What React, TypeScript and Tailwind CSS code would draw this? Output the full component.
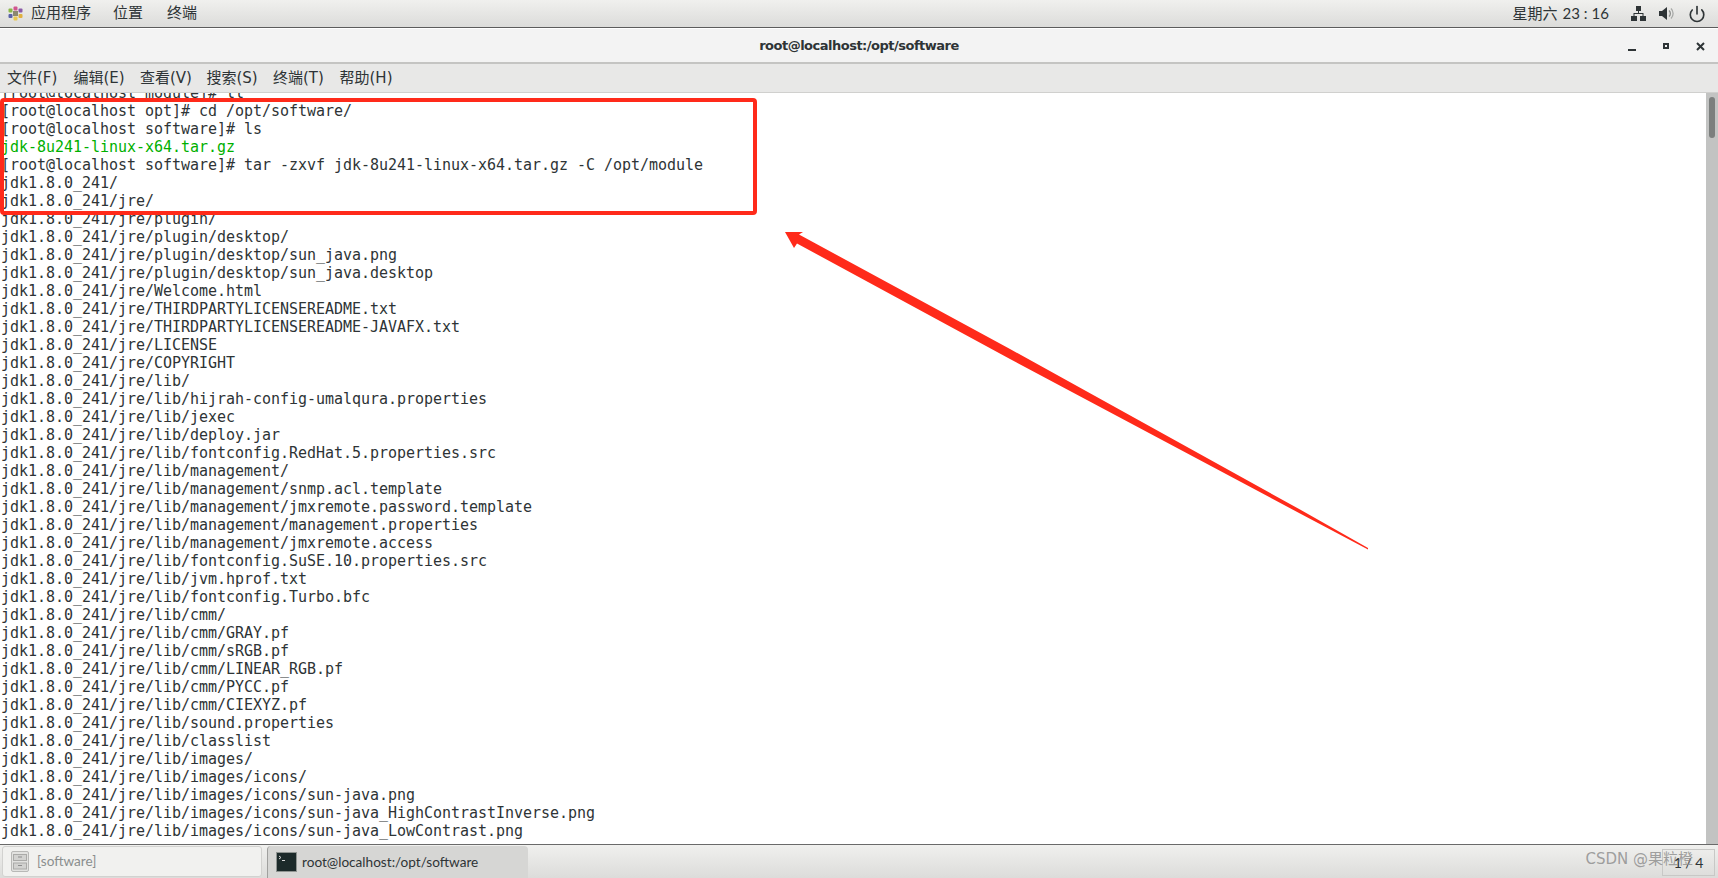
import { Power } from 'lucide-react'

const mono = "font-['DejaVu_Sans_Mono','Liberation_Mono',monospace]"
const cjk = "font-['DejaVu_Sans','Noto_Sans_CJK_SC',sans-serif]"
const narrow = "font-['Lato','Noto_Sans_CJK_SC',sans-serif]"

const files = [
  'plugin/', 'plugin/desktop/', 'plugin/desktop/sun_java.png', 'plugin/desktop/sun_java.desktop', 'Welcome.html',
  'THIRDPARTYLICENSEREADME.txt', 'THIRDPARTYLICENSEREADME-JAVAFX.txt', 'LICENSE', 'COPYRIGHT', 'lib/',
  'lib/hijrah-config-umalqura.properties', 'lib/jexec', 'lib/deploy.jar', 'lib/fontconfig.RedHat.5.properties.src',
  'lib/management/', 'lib/management/snmp.acl.template', 'lib/management/jmxremote.password.template',
  'lib/management/management.properties', 'lib/management/jmxremote.access', 'lib/fontconfig.SuSE.10.properties.src',
  'lib/jvm.hprof.txt', 'lib/fontconfig.Turbo.bfc', 'lib/cmm/', 'lib/cmm/GRAY.pf', 'lib/cmm/sRGB.pf',
  'lib/cmm/LINEAR_RGB.pf', 'lib/cmm/PYCC.pf', 'lib/cmm/CIEXYZ.pf', 'lib/sound.properties', 'lib/classlist',
  'lib/images/', 'lib/images/icons/', 'lib/images/icons/sun-java.png', 'lib/images/icons/sun-java_HighContrastInverse.png',
  'lib/images/icons/sun-java_LowContrast.png',
]

const menus = ['文件(F)', '编辑(E)', '查看(V)', '搜索(S)', '终端(T)', '帮助(H)']

function Line({ children, green }: { children: string; green?: boolean }) {
  return <div className={`h-[18px] leading-[18px] whitespace-pre ${green ? 'text-[#00b000]' : 'text-[#2e3436]'}`}>{children}</div>
}

function AppLogo() {
  return (
    <svg width="15" height="15" viewBox="0 0 15 15">
      <rect x="5.5" y="0.5" width="4" height="4" rx="1" fill="#d0568f" />
      <rect x="10.5" y="2.5" width="4" height="4" rx="1" fill="#8a5aa8" />
      <rect x="10.5" y="8" width="4" height="4" rx="1" fill="#e0b040" />
      <rect x="5.5" y="10.5" width="4" height="4" rx="1" fill="#e8c850" />
      <rect x="0.5" y="8" width="4" height="4" rx="1" fill="#5a62a8" />
      <rect x="0.5" y="2.5" width="4" height="4" rx="1" fill="#8cb848" />
      <rect x="5" y="5" width="5" height="5" fill="#8c8870" />
    </svg>
  )
}

function NetworkIcon() {
  return (
    <svg width="15" height="15" viewBox="0 0 15 15" fill="#2e3436">
      <rect x="5" y="0" width="5" height="5" />
      <rect x="0" y="10" width="6" height="5" />
      <rect x="9" y="10" width="6" height="5" />
      <path d="M7 5h1v2h4.5v3h-1V8h-8v2h-1V7H7z" />
    </svg>
  )
}

function VolumeIcon() {
  return (
    <svg width="16" height="15" viewBox="0 0 16 15" fill="none">
      <path d="M0 5h3l5-4v13l-5-4H0z" fill="#2e3436" />
      <path d="M10 4.5a4 4 0 0 1 0 6" stroke="#8c8e8c" strokeWidth="1.3" />
      <path d="M12 2.5a7 7 0 0 1 0 10" stroke="#a8aaa8" strokeWidth="1.3" />
    </svg>
  )
}

function FileCabinetIcon() {
  return (
    <svg width="18" height="21" viewBox="0 0 18 21">
      <rect x="0.5" y="0.5" width="17" height="20" rx="1.5" fill="#e2e2e0" stroke="#b8b8b6" />
      <rect x="2.5" y="3.5" width="13" height="6" fill="#d2d2d0" stroke="#aaaaa8" />
      <rect x="2.5" y="12" width="13" height="6" fill="#d2d2d0" stroke="#aaaaa8" />
      <rect x="7" y="5.5" width="4" height="1" fill="#8c8c8c" />
      <rect x="7" y="14" width="4" height="1" fill="#8c8c8c" />
    </svg>
  )
}

function TerminalIcon() {
  return (
    <svg width="21" height="20" viewBox="0 0 21 20">
      <rect x="0.5" y="0.5" width="20" height="19" fill="#1c2a2a" stroke="#8f9491" />
      <path d="M3 4l2 1.5L3 7" stroke="#d8d8d8" fill="none" />
      <rect x="6" y="8" width="3" height="1" fill="#d8d8d8" />
    </svg>
  )
}

export default function App() {
  return (
    <div className={`relative h-[878px] w-[1718px] overflow-hidden bg-white ${cjk}`}>
      {/* top panel */}
      <div className="flex h-[28px] items-center justify-between border-b border-[#5c5c5c] bg-gradient-to-b from-[#f0f0ee] to-[#dcdcda] text-[15px] text-[#2e3436]">
        <div className="flex items-center">
          <div className="ml-[8px] mr-[8px] flex"><AppLogo /></div>
          <span>应用程序</span>
          <span className="ml-[22px]">位置</span>
          <span className="ml-[24px]">终端</span>
        </div>
        <div className="flex items-center">
          <span className={`mr-[22px] flex whitespace-nowrap ${narrow}`}>
            <span className="mr-[5px]">星期六</span>
            <span>23</span>
            <span className="mx-[4px]">:</span>
            <span>16</span>
          </span>
          <div className="mr-[13px] flex"><NetworkIcon /></div>
          <div className="mr-[13px] flex"><VolumeIcon /></div>
          <Power size={18} strokeWidth={2.2} className="mr-[12px] text-[#2e3436]" />
        </div>
      </div>

      {/* title bar */}
      <div className="flex h-[36px] items-center justify-center border-t border-b-2 border-t-white border-b-[#c4c4c2] bg-[#f3f3f3]">
        <span className="text-[13px] font-bold tracking-[-0.5px] text-[#2e3436]">root@localhost:/opt/software</span>
        <div className="absolute right-[1px] top-[28px] flex h-[36px] items-center">
          <div className="flex w-[34px] justify-center pt-[7px]"><div className="h-[2px] w-[8px] bg-[#2e3436]" /></div>
          <div className="flex w-[34px] justify-center"><div className="h-[6px] w-[6px] border-2 border-[#2e3436]" /></div>
          <div className="flex w-[34px] justify-center">
            <svg width="9" height="9" viewBox="0 0 9 9" stroke="#2e3436" strokeWidth="2"><path d="M1 1l7 7M8 1l-7 7" /></svg>
          </div>
        </div>
      </div>

      {/* menu bar */}
      <div className="flex h-[29px] items-center gap-[15.5px] border-b border-[#d0d0ce] bg-[#e8e8e7] pl-[7px] pt-[1px] text-[15px] text-[#2e3436]">
        {menus.map(m => <span key={m} className="w-[51px] whitespace-nowrap">{m}</span>)}
      </div>

      {/* terminal */}
      <div className="flex h-[751px]">
        <div className={`flex-1 overflow-hidden pl-[1px] text-[15px] tracking-[-0.03px] ${mono}`}>
          <div className="-mt-[9px]">
            <Line>[root@localhost module]# ll</Line>
            <Line>[root@localhost opt]# cd /opt/software/</Line>
            <Line>[root@localhost software]# ls</Line>
            <Line green>jdk-8u241-linux-x64.tar.gz</Line>
            <Line>[root@localhost software]# tar -zxvf jdk-8u241-linux-x64.tar.gz -C /opt/module</Line>
            <Line>jdk1.8.0_241/</Line>
            <Line>jdk1.8.0_241/jre/</Line>
            {files.map(f => <Line key={f}>{`jdk1.8.0_241/jre/${f}`}</Line>)}
          </div>
        </div>
        <div className="w-[12px] bg-[#c2c3c2] pt-[4px]">
          <div className="mx-auto h-[41px] w-[6px] rounded-full bg-[#7c7f7e]" />
        </div>
      </div>

      {/* window list */}
      <div className={`flex h-[34px] items-stretch border-t border-[#6a6a6a] bg-gradient-to-b from-[#f0f0ee] to-[#dcdcda] text-[13.6px] ${narrow}`}>
        <div className="my-[1px] ml-[2px] flex w-[260px] items-center gap-[8px] rounded-[3px] border border-[#d2d2d0] bg-[#f1f1ef] pl-[8px] text-[#8a8e8e]">
          <FileCabinetIcon />
          <span>[software]</span>
        </div>
        <div className="ml-[5px] mt-[1px] flex w-[261px] items-center gap-[5px] rounded-t-sm border-l border-[#a0a09e] bg-[#d6d6d4] pl-[8px] text-[#2e3436]">
          <TerminalIcon />
          <span>root@localhost:/opt/software</span>
        </div>
        <div className="ml-auto mr-[3px] mt-[4px] flex h-[27px] w-[53px] items-center justify-center border border-[#c8c8c6] text-[14px] text-[#2e3436]">1 / 4</div>
      </div>

      {/* annotations */}
      <div className="absolute left-0 top-[98px] h-[117px] w-[757px] rounded-[4px] border-[4px] border-[#ff2a1a]" />
      <svg className="absolute left-[780px] top-[228px]" width="600" height="330" viewBox="0 0 600 330">
        <path d="M5 4 L23 4 L19 6.5 L230 121 L520 281.5 L588 320 L588 321.5 L520 285.5 L230 131 L17 15.5 L14 20 Z" fill="#ff2a1a" />
      </svg>
      <div className="absolute bottom-[8px] right-[25px] text-[15px] text-[#8a8a8a]/80">CSDN @果粒橙</div>
    </div>
  )
}
